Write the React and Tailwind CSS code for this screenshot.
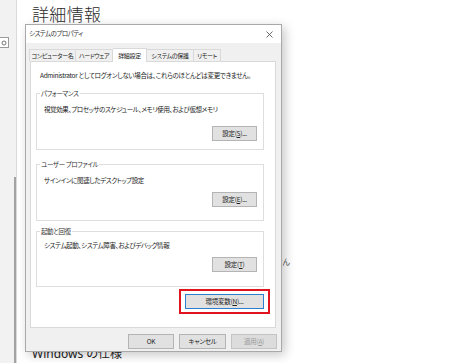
import React from 'react';

const jp = "font-['Noto_Sans_CJK_JP','Noto_Sans',sans-serif] [font-feature-settings:'palt']";

function WinButton({ children, disabled = false, focused = false, className = '' }) {
  return (
    <button
      className={`h-[15px] flex items-center justify-center text-[6.5px] tracking-[-0.04em] leading-none ${
        disabled
          ? 'bg-[#dcdcdc] border border-[#c4c4c4] text-[#9a9a9a]'
          : focused
          ? 'bg-[#e1e1e1] border border-[#2f7fd0] text-[#222]'
          : 'bg-[#e1e1e1] border border-[#b4b4b4] text-[#222]'
      } ${className}`}
    >
      {children}
    </button>
  );
}

function GroupBox({ label, text, button, className = '', bodyClass = '' }) {
  return (
    <fieldset className={`ml-[5px] mr-[11px] border border-[#dedede] ${className}`}>
      <legend className="ml-[3px] px-[1px] text-[6.5px] tracking-[-0.06em] leading-[9px] text-[#333]">{label}</legend>
      <div className={`pl-[7px] pr-[6px] ${bodyClass}`}>
        <div className="text-[6.5px] tracking-[-0.06em] leading-[9px] text-[#222]">{text}</div>
        <div className="flex justify-end">{button}</div>
      </div>
    </fieldset>
  );
}

export default function App() {
  return (
    <div className={`relative w-[474px] h-[363px] overflow-hidden bg-white flex ${jp}`}>
      {/* Settings sidebar edge */}
      <aside className="w-[17px] shrink-0 bg-[#f2f2f2] border-r border-[#dadada] flex flex-col">
        <div className="mt-[37px] h-[11px] w-[9px] bg-white border border-l-0 border-[#9a9a9a] flex items-center">
          <svg width="6" height="6" viewBox="0 0 6 6" className="ml-[1px]">
            <circle cx="3" cy="3" r="2" fill="none" stroke="#555" strokeWidth="0.8" />
          </svg>
        </div>
        <div className="mt-auto self-end w-[2px] h-[186px] bg-[#a3a3a3]" />
      </aside>

      {/* Page behind the dialog */}
      <main className="flex-1 pl-[15px] pt-[4px]">
        <h1 className="text-[17px] leading-[20px] font-light text-[#2b2b2b] tracking-[0.02em]">詳細情報</h1>
        <p className="mt-[232px] w-[258px] text-right text-[8px] leading-[12px] text-[#555]">ません</p>
        <h2 className="mt-[78px] text-[12px] leading-[16px] text-[#222] font-['Noto_Sans','Noto_Sans_CJK_JP',sans-serif]">
          Windows の仕様
        </h2>
      </main>

      {/* System properties dialog */}
      <div className="absolute left-[25px] top-[24px] w-[257px] h-[328px] border border-[#a9a9a9] bg-[#f0f0f0] shadow-[3px_3px_10px_rgba(0,0,0,0.22)] flex flex-col">
        <div className="h-[18px] bg-white flex items-center justify-between pl-[3px] pr-[8px]">
          <span className="text-[6.5px] tracking-[-0.08em] text-[#333]">システムのプロパティ</span>
          <svg width="7" height="7" viewBox="0 0 7 7">
            <path d="M0.5 0.5 L6.5 6.5 M6.5 0.5 L0.5 6.5" stroke="#444" strokeWidth="0.8" />
          </svg>
        </div>

        {/* Tabs */}
        <div className="mt-[5px] ml-[3px] flex items-end text-[6px] tracking-[-0.06em] text-[#222] h-[13px] whitespace-nowrap">
          <div className="w-[47px] h-[12px] flex items-center justify-center border border-b-0 border-[#d9d9d9] bg-[#f0f0f0]">コンピューター名</div>
          <div className="w-[37px] h-[12px] flex items-center justify-center border border-b-0 border-l-0 border-[#d9d9d9] bg-[#f0f0f0]">ハードウェア</div>
          <div className="w-[34px] h-[14px] -mb-px relative z-10 flex items-center justify-center border border-b-0 border-l-0 border-[#d9d9d9] bg-white">詳細設定</div>
          <div className="w-[47px] h-[12px] flex items-center justify-center border border-b-0 border-l-0 border-[#d9d9d9] bg-[#f0f0f0]">システムの保護</div>
          <div className="w-[27px] h-[12px] flex items-center justify-center border border-b-0 border-l-0 border-[#d9d9d9] bg-[#f0f0f0]">リモート</div>
        </div>

        {/* Tab panel */}
        <div className="ml-[4px] mr-[5px] h-[267px] bg-white border border-[#d9d9d9] flex flex-col">
          <p className="mt-[9px] ml-[9px] text-[6.5px] tracking-[-0.05em] leading-[9px] text-[#222] whitespace-nowrap">
            Administrator としてログオンしない場合は、これらのほとんどは変更できません。
          </p>

          <GroupBox
            className="mt-[9px]"
            bodyClass="pt-[7px] pb-[8px]"
            label="パフォーマンス"
            text="視覚効果、プロセッサのスケジュール、メモリ使用、および仮想メモリ"
            button={<WinButton className="w-[45px] mt-[12px]">設定(<u>S</u>)...</WinButton>}
          />

          <GroupBox
            className="mt-[10px]"
            bodyClass="pt-[7px] pb-[13px]"
            label="ユーザー プロファイル"
            text="サインインに関連したデスクトップ設定"
            button={<WinButton className="w-[45px] mt-[7px]">設定(<u>E</u>)...</WinButton>}
          />

          <GroupBox
            className="mt-[6px]"
            bodyClass="pt-[5px] pb-[14px]"
            label="起動と回復"
            text="システム起動、システム障害、およびデバッグ情報"
            button={<WinButton className="w-[45px] mt-[7px]">設定(<u>T</u>)</WinButton>}
          />

          <div className="mt-[2px] mr-[5px] flex justify-end">
            <div className="border-2 border-[#e0141e] py-[3px] px-[4px]">
              <WinButton focused className="w-[79px]">環境変数(<u>N</u>)...</WinButton>
            </div>
          </div>
        </div>

        {/* Dialog buttons */}
        <div className="mt-[6px] mr-[4px] flex justify-end gap-[5px]">
          <WinButton className="w-[46px]">OK</WinButton>
          <WinButton className="w-[47px]">キャンセル</WinButton>
          <WinButton disabled className="w-[46px]">適用(<u>A</u>)</WinButton>
        </div>
      </div>
    </div>
  );
}
